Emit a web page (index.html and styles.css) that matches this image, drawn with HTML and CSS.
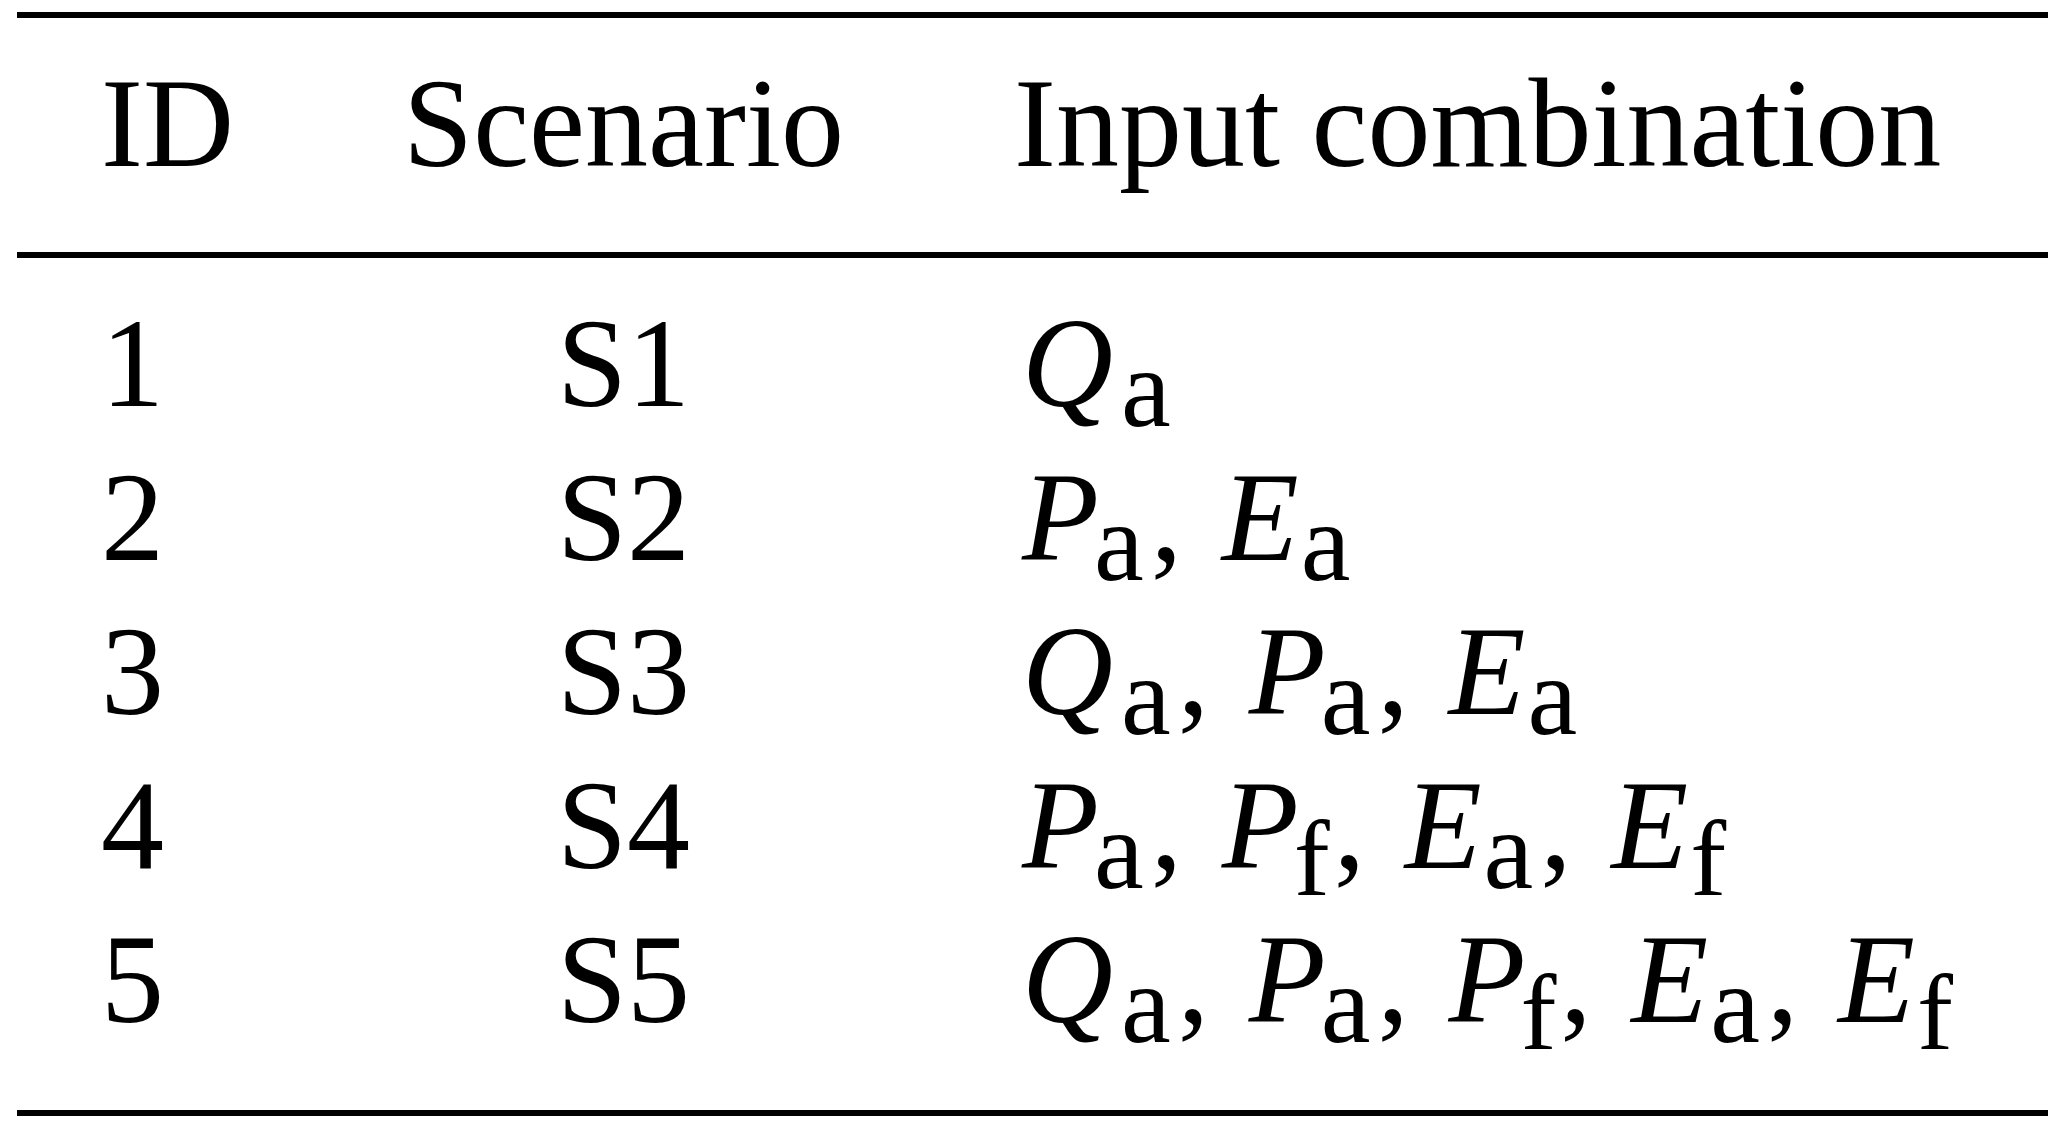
FILE: index.html
```html
<!DOCTYPE html>
<html lang="en">
<head>
<meta charset="utf-8">
<title>Input combinations</title>
<link rel="stylesheet" href="styles.css">
</head>
<body>
<div class="table">
  <div class="head">
    <div class="row">
      <div class="c-id">ID</div>
      <div class="c-sc">Scenario</div>
      <div class="c-in">Input combination</div>
    </div>
  </div>
  <div class="body">
    <div class="row">
      <div class="c-id">1</div>
      <div class="c-sc">S1</div>
      <div class="c-in expr"><i class="v q">Q</i><span class="sub">a</span></div>
    </div>
    <div class="row">
      <div class="c-id">2</div>
      <div class="c-sc">S2</div>
      <div class="c-in expr"><i class="v p">P</i><span class="sub">a</span>, <i class="v e">E</i><span class="sub">a</span></div>
    </div>
    <div class="row">
      <div class="c-id">3</div>
      <div class="c-sc">S3</div>
      <div class="c-in expr"><i class="v q">Q</i><span class="sub">a</span>, <i class="v p">P</i><span class="sub">a</span>, <i class="v e">E</i><span class="sub">a</span></div>
    </div>
    <div class="row">
      <div class="c-id">4</div>
      <div class="c-sc">S4</div>
      <div class="c-in expr"><i class="v p">P</i><span class="sub">a</span>, <i class="v p">P</i><span class="sub f">f</span>, <i class="v e">E</i><span class="sub">a</span>, <i class="v e">E</i><span class="sub f">f</span></div>
    </div>
    <div class="row">
      <div class="c-id">5</div>
      <div class="c-sc">S5</div>
      <div class="c-in expr"><i class="v q">Q</i><span class="sub">a</span>, <i class="v p">P</i><span class="sub">a</span>, <i class="v p">P</i><span class="sub f">f</span>, <i class="v e">E</i><span class="sub">a</span>, <i class="v e">E</i><span class="sub f">f</span></div>
    </div>
  </div>
</div>
</body>
</html>
```

FILE: styles.css
```css
html, body {
  margin: 0;
  padding: 0;
  background: #ffffff;
}

body {
  font-family: "Liberation Serif", "Times New Roman", serif;
  font-size: 126px;
  color: #000000;
}

.table {
  width: 2031px;
  margin: 12px 0 0 17px;
  border-top: 6px solid #000;
  border-bottom: 6px solid #000;
}

.head {
  padding: 28.5px 0 51.5px;
  border-bottom: 6px solid #000;
}

.body {
  padding: 28.5px 0 53.5px;
}

.row {
  display: grid;
  grid-template-columns: 386px 441px 1fr;
  line-height: 154px;
  height: 154px;
  white-space: nowrap;
}

.c-id {
  padding-left: 84px;
}

.c-sc {
  text-align: center;
}

.c-in {
  padding-left: 170px;
}

.c-in.expr {
  padding-left: 178px;
  word-spacing: 8px;
}

.v {
  font-style: italic;
}

.v.q {
  margin-right: 8px;
}

.v.p {
  margin-right: -5px;
}

.v.e {
  margin-right: 2px;
}

.sub {
  font-size: 112px;
  line-height: 0;
  vertical-align: -20px;
  margin-right: 7px;
}

.sub.f {
  font-size: 108px;
  vertical-align: -27px;
  margin-right: 4px;
}
```
